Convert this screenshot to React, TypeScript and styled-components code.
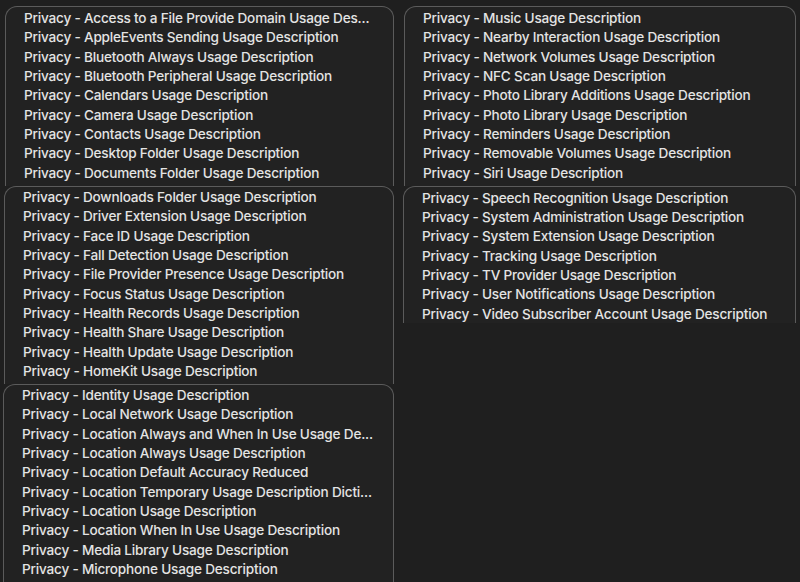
import styled, { createGlobalStyle } from 'styled-components';

const GlobalStyle = createGlobalStyle`
  html, body {
    margin: 0;
    padding: 0;
    background: #1f1f1f;
    overflow: hidden;
  }
`;

const Board = styled.div`
  display: flex;
  gap: 9px;
  padding: 6px 4px 0 3px;
  height: 582px;
  box-sizing: border-box;
  font-family: Inter, 'Liberation Sans', sans-serif;
`;

const Column = styled.div<{ $width: number }>`
  display: flex;
  flex-direction: column;
  width: ${({ $width }) => $width}px;
  flex-shrink: 0;
`;

const Panel = styled.div<{ $shift: number; $height: number; $padTop: number }>`
  margin-left: ${({ $shift }) => $shift}px;
  height: ${({ $height }) => $height}px;
  flex-shrink: 0;
  box-sizing: border-box;
  padding: ${({ $padTop }) => $padTop}px 4px 0 18px;
  background: #222222;
  border: 1px solid rgba(255, 255, 255, 0.26);
  border-bottom: none;
  border-radius: 12px 12px 0 0;
  overflow: hidden;
`;

const MenuItem = styled.div`
  height: 19.35px;
  line-height: 19.35px;
  font-size: 13.6px;
  letter-spacing: -0.2px;
  font-weight: 500;
  color: #e4e4e4;
  white-space: nowrap;
`;

const groups = {
  left1: [
    'Access to a File Provide Domain Usage Des...',
    'AppleEvents Sending Usage Description',
    'Bluetooth Always Usage Description',
    'Bluetooth Peripheral Usage Description',
    'Calendars Usage Description',
    'Camera Usage Description',
    'Contacts Usage Description',
    'Desktop Folder Usage Description',
    'Documents Folder Usage Description',
  ],
  left2: [
    'Downloads Folder Usage Description',
    'Driver Extension Usage Description',
    'Face ID Usage Description',
    'Fall Detection Usage Description',
    'File Provider Presence Usage Description',
    'Focus Status Usage Description',
    'Health Records Usage Description',
    'Health Share Usage Description',
    'Health Update Usage Description',
    'HomeKit Usage Description',
  ],
  left3: [
    'Identity Usage Description',
    'Local Network Usage Description',
    'Location Always and When In Use Usage De...',
    'Location Always Usage Description',
    'Location Default Accuracy Reduced',
    'Location Temporary Usage Description Dicti...',
    'Location Usage Description',
    'Location When In Use Usage Description',
    'Media Library Usage Description',
    'Microphone Usage Description',
  ],
  right1: [
    'Music Usage Description',
    'Nearby Interaction Usage Description',
    'Network Volumes Usage Description',
    'NFC Scan Usage Description',
    'Photo Library Additions Usage Description',
    'Photo Library Usage Description',
    'Reminders Usage Description',
    'Removable Volumes Usage Description',
    'Siri Usage Description',
  ],
  right2: [
    'Speech Recognition Usage Description',
    'System Administration Usage Description',
    'System Extension Usage Description',
    'Tracking Usage Description',
    'TV Provider Usage Description',
    'User Notifications Usage Description',
    'Video Subscriber Account Usage Description',
  ],
};

const renderItems = (items: string[]) =>
  items.map((item) => <MenuItem key={item}>Privacy - {item}</MenuItem>);

export default function App() {
  return (
    <>
      <GlobalStyle />
      <Board>
        <Column $width={391}>
          <Panel $shift={2} $height={180} $padTop={2}>
            {renderItems(groups.left1)}
          </Panel>
          <Panel $shift={1} $height={198} $padTop={1}>
            {renderItems(groups.left2)}
          </Panel>
          <Panel $shift={0} $height={220} $padTop={1}>
            {renderItems(groups.left3)}
          </Panel>
        </Column>
        <Column $width={393}>
          <Panel $shift={1} $height={180} $padTop={2}>
            {renderItems(groups.right1)}
          </Panel>
          <Panel $shift={0} $height={137} $padTop={1.5}>
            {renderItems(groups.right2)}
          </Panel>
        </Column>
      </Board>
    </>
  );
}
